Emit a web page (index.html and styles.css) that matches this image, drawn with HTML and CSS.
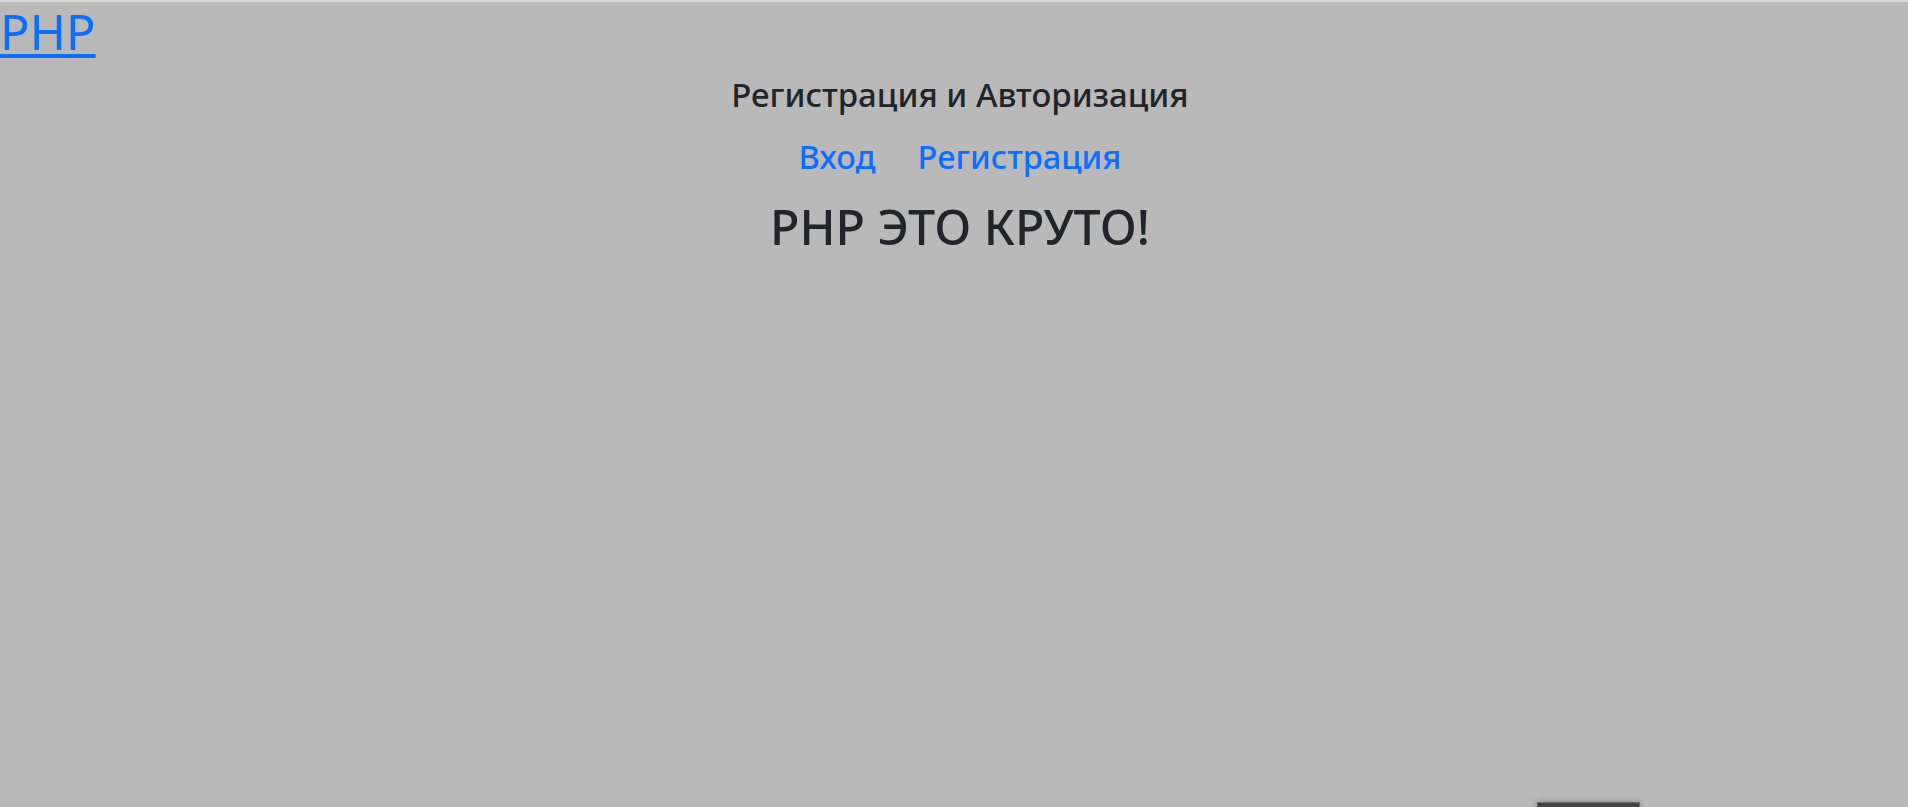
FILE: index.html
```html
<!DOCTYPE html>
<html lang="ru">
<head>
<meta charset="utf-8">
<title>PHP</title>
<link rel="stylesheet" href="styles.css">
</head>
<body>
<header class="top">
  <a class="brand" href="#">PHP</a>
</header>
<main class="content">
  <h3 class="title">Регистрация и Авторизация</h3>
  <nav class="links">
    <a class="link" href="#">Вход</a>
    <a class="link" href="#">Регистрация</a>
  </nav>
  <h1 class="headline">PHP ЭТО КРУТО!</h1>
</main>
<div class="dock"></div>
</body>
</html>
```
FILE: styles.css
```css
html, body {
  margin: 0;
  height: 100%;
}
body {
  background: #b9b9b9;
  border-top: 2px solid #d6d6d6;
  box-sizing: border-box;
  font-family: "Noto Sans", "Open Sans", sans-serif;
  color: #212529;
  overflow: hidden;
  position: relative;
}
.top {
  line-height: 1.2;
}
.brand {
  font-size: 49px;
  color: #0d6efd;
  text-decoration: underline;
  text-decoration-thickness: 4px;
  text-underline-offset: 4px;
}
.content {
  text-align: center;
  padding-left: 12px;
}
.title {
  margin: 14px 0 0;
  font-size: 33px;
  font-weight: 500;
  line-height: 1.2;
}
.links {
  display: flex;
  justify-content: center;
  gap: 42px;
  margin-top: 23px;
}
.link {
  font-size: 32.6px;
  font-weight: 500;
  color: #0d6efd;
  text-decoration: none;
  line-height: 1.2;
}
.headline {
  margin: 21px 0 0;
  font-size: 48.3px;
  font-weight: 500;
  line-height: 1.2;
}
.dock {
  position: absolute;
  left: 1537px;
  top: 800px;
  width: 101px;
  height: 20px;
  background: #444;
  border: 1px solid #6a6a6a;
  box-shadow: 0 0 6px rgba(0,0,0,0.3);
}
```
